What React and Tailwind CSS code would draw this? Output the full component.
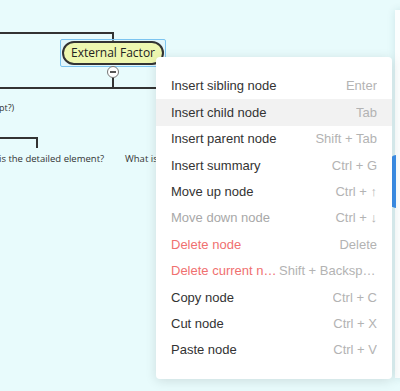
import React from 'react';

const items = [
  { label: 'Insert sibling node', key: 'Enter' },
  { label: 'Insert child node', key: 'Tab', active: true },
  { label: 'Insert parent node', key: 'Shift + Tab' },
  { label: 'Insert summary', key: 'Ctrl + G' },
  { label: 'Move up node', key: 'Ctrl + ↑' },
  { label: 'Move down node', key: 'Ctrl + ↓', disabled: true },
  { label: 'Delete node', key: 'Delete', danger: true },
  { label: 'Delete current node', key: 'Shift + Backspace', danger: true },
  { label: 'Copy node', key: 'Ctrl + C' },
  { label: 'Cut node', key: 'Ctrl + X' },
  { label: 'Paste node', key: 'Ctrl + V' },
];

const ContextMenu = () => (
  <div className="absolute left-[156px] top-[57px] w-[236px] py-[16px] bg-white rounded-[4px] shadow-[0_2px_12px_rgba(0,0,0,0.12)]">
    {items.map((it) => (
      <div
        key={it.label}
        className={`flex items-center h-[26.4px] px-[15px] text-[13px] ${it.active ? 'bg-[#f2f2f2]' : ''}`}
      >
        <span
          className={`flex-1 min-w-0 truncate ${
            it.danger ? 'text-[#f07070]' : it.disabled ? 'text-[#a8a8a8]' : 'text-[#333333]'
          }`}
        >
          {it.label}
        </span>
        <span className="shrink-0 max-w-[98px] truncate text-[#b3b3b3]">{it.key}</span>
      </div>
    ))}
  </div>
);

const MindMap = () => (
  <div className="absolute inset-0 font-['Segoe_UI','Open_Sans','Liberation_Sans',sans-serif]">
    {/* lines */}
    <div className="absolute left-0 top-[32px] w-[114px] h-[2px] bg-[#333]" />
    <div className="absolute left-[112px] top-[32px] w-[2px] h-[10px] bg-[#333]" />
    <div className="absolute left-[112px] top-[76px] w-[2px] h-[12px] bg-[#333]" />
    <div className="absolute left-0 top-[87px] w-[160px] h-[2px] bg-[#333]" />
    <div className="absolute left-0 top-[137px] w-[38px] h-[2px] bg-[#333]" />
    <div className="absolute left-[36px] top-[137px] w-[2px] h-[11px] bg-[#333]" />

    {/* selected node */}
    <div className="absolute left-[60px] top-[39px] w-[106px] h-[28px] border border-[#7cc4f0] rounded-[2px] bg-[#d8f0fb]/40" />
    <div className="absolute left-[62px] top-[41px] w-[102px] h-[24px] flex items-center justify-center rounded-[12px] border-2 border-[#333] bg-[#eef7b0] text-[12px] text-[#222]">
      External Factor
    </div>
    <div className="absolute left-[107px] top-[66px] w-[12px] h-[12px] rounded-full border border-[#777] bg-white flex items-center justify-center">
      <div className="w-[6px] h-[1.5px] bg-[#555]" />
    </div>

    {/* texts */}
    <div className="absolute left-[-1px] top-[101px] text-[9px] text-[#333]">pt?)</div>
    <div className="absolute left-[-1px] top-[152px] text-[9.5px] text-[#333] whitespace-nowrap">is the detailed element?</div>
    <div className="absolute left-[125px] top-[152px] text-[9.5px] text-[#333] whitespace-nowrap">What is</div>
  </div>
);

export default function App() {
  return (
    <div className="relative w-[400px] h-[391px] overflow-hidden bg-[#e8fbfc] font-['Liberation_Sans',Arial,sans-serif]">
      <MindMap />
      {/* right side panel */}
      <div className="absolute left-[395px] top-[10px] w-[20px] h-[368px] bg-[#fbfefe] shadow-[0_0_8px_rgba(0,80,90,0.12)]" />
      <div className="absolute left-[390px] top-[155px] w-[6px] h-[53px] rounded-l-[6px] bg-[#3c8fe9]" />
      <ContextMenu />
    </div>
  );
}
